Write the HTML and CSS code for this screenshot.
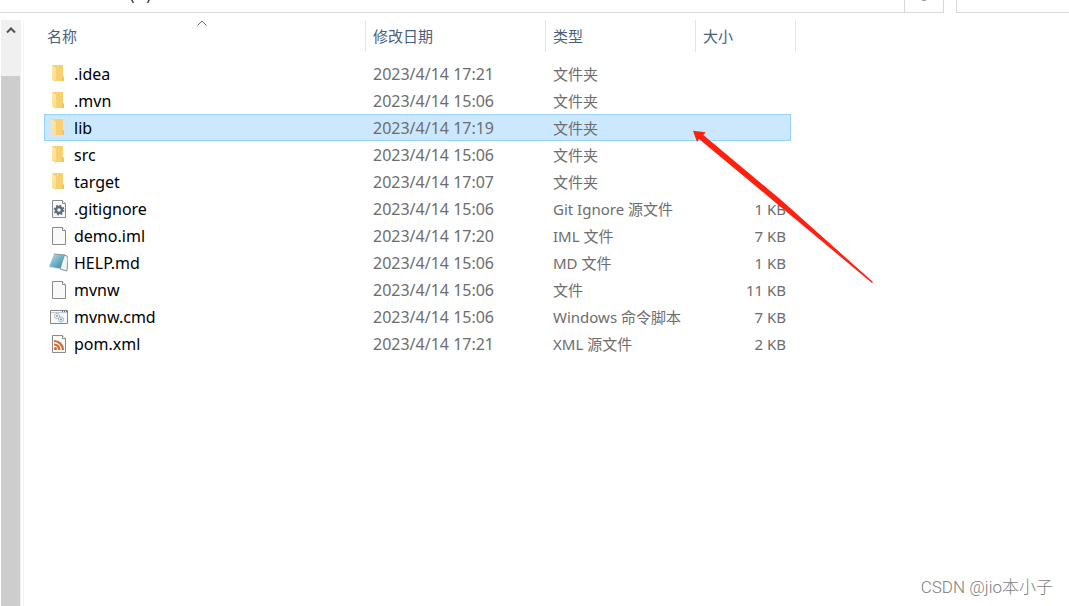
FILE: index.html
```html
<!DOCTYPE html>
<html lang="zh-CN">
<head>
  <meta charset="UTF-8">
  <meta name="viewport" content="width=device-width, initial-scale=1.0">
  <title>demo</title>
  <link rel="stylesheet" href="styles.css">
</head>
<body>

  <!-- Icons used by the file list -->
  <svg class="icon-defs" width="0" height="0" aria-hidden="true">
    <linearGradient id="folderFill" x1="0" y1="0" x2="1" y2="1">
      <stop offset="0" stop-color="#ffeaac"/>
      <stop offset="1" stop-color="#fbdb85"/>
    </linearGradient>
    <linearGradient id="noteFill" x1="0" y1="0" x2="1" y2="1">
      <stop offset="0" stop-color="#b5e3eb"/>
      <stop offset="1" stop-color="#2f7f9e"/>
    </linearGradient>
    <symbol id="folder" viewBox="0 0 20 20">
      <path d="M4 1h11v11l1 1v4H7z" fill="#f6d071"/>
      <path d="M14 12l2 1v4h-2z" fill="#eec462"/>
      <path d="M4 1l4 3v14l-4-2z" fill="url(#folderFill)"/>
    </symbol>
    <symbol id="page" viewBox="0 0 20 20">
      <path d="M4.500 1.500h10l3 3v14h-13z" fill="#f8f9f9" stroke="#8b8b8b"/>
      <path d="M14.500 1.500v3h3" fill="#fff" stroke="#8b8b8b"/>
    </symbol>
    <symbol id="gear" viewBox="0 0 20 20">
      <use href="#page"/>
      <circle cx="11" cy="11" r="3" fill="none" stroke="#5b6b77" stroke-width="2.400"/>
      <circle cx="11" cy="11" r="4.600" fill="none" stroke="#5b6b77" stroke-width="1.600" stroke-dasharray="1.800 1.810"/>
    </symbol>
    <symbol id="note" viewBox="0 0 20 20">
      <path d="M16 2l3 1 1 2-1 13-7-2z" fill="#f1f4f5" stroke="#777" stroke-width=".8"/>
      <path d="M6 1l11 1-5 14-11-2z" fill="url(#noteFill)"/>
      <path d="M6 1l11 1" stroke="#8a9ba3" stroke-width="1.200"/>
      <path d="M1 14l11 2" stroke="#d7edf2"/>
    </symbol>
    <symbol id="script" viewBox="0 0 20 20">
      <path d="M2.500 3.500h17v13h-17z" fill="#f7f8f9" stroke="#858585"/>
      <path d="M3 5.500h16" stroke="#c4c7c9"/>
      <path d="M14 4.500h1m1 0h1m1 0h1" stroke="#666"/>
      <circle cx="9" cy="9" r="2.500" fill="none" stroke="#8b949b" stroke-dasharray="1.200 .5"/>
      <circle cx="9" cy="9" r="1" fill="#8b949b"/>
      <circle cx="13" cy="12.500" r="2.500" fill="#e5f1f9" stroke="#7d9db5" stroke-dasharray="1.200 .5"/>
      <circle cx="13" cy="12.500" r="1" fill="#7d9db5"/>
    </symbol>
    <symbol id="feed" viewBox="0 0 20 20">
      <use href="#page"/>
      <circle cx="7.500" cy="14.500" r="1.600" fill="#d2692f"/>
      <path d="M6 10.500a5.500 5.500 0 0 1 5.500 5.500M6 7a9 9 0 0 1 9 9" fill="none" stroke="#d2692f" stroke-width="2.200"/>
    </symbol>
  </svg>

  <!-- Address bar and search box -->
  <header class="toolbar">
    <div class="address"><span>(F:)</span></div>
    <button class="refresh" aria-label="刷新"><svg viewBox="0 0 12 12"><circle cx="6" cy="6" r="5" fill="none" stroke="#666" stroke-width="1.500"/></svg></button>
    <input class="search" type="text" aria-label="搜索">
  </header>

  <div class="explorer">
    <div class="scrollbar">
      <button class="scroll-up" aria-label="向上滚动"><svg viewBox="0 0 10 8"><path d="M1 6.500l4-4 4 4" fill="none" stroke="#505050" stroke-width="2"/></svg></button>
      <div class="thumb"></div>
    </div>

    <main class="content">
      <table class="files">
        <thead>
          <tr>
            <th class="name">名称<svg class="sort" viewBox="0 0 10 6"><path d="M.5 5.500l4.500-4.500 4.500 4.500" fill="none" stroke="#666"/></svg></th>
            <th class="date">修改日期</th>
            <th class="type">类型</th>
            <th class="size">大小</th>
            <th class="edge"></th>
          </tr>
        </thead>
        <tbody>
          <tr><td><a href="#"><svg><use href="#folder"/></svg>.idea</a></td><td class="time">2023/4/14 17:21</td><td>文件夹</td><td></td></tr>
          <tr><td><a href="#"><svg><use href="#folder"/></svg>.mvn</a></td><td class="time">2023/4/14 15:06</td><td>文件夹</td><td></td></tr>
          <tr class="selected"><td><a href="#"><svg><use href="#folder"/></svg>lib</a></td><td class="time">2023/4/14 17:19</td><td>文件夹</td><td></td></tr>
          <tr><td><a href="#"><svg><use href="#folder"/></svg>src</a></td><td class="time">2023/4/14 15:06</td><td>文件夹</td><td></td></tr>
          <tr><td><a href="#"><svg><use href="#folder"/></svg>target</a></td><td class="time">2023/4/14 17:07</td><td>文件夹</td><td></td></tr>
          <tr><td><a href="#"><svg><use href="#gear"/></svg>.gitignore</a></td><td class="time">2023/4/14 15:06</td><td>Git Ignore 源文件</td><td>1 KB</td></tr>
          <tr><td><a href="#"><svg><use href="#page"/></svg>demo.iml</a></td><td class="time">2023/4/14 17:20</td><td>IML 文件</td><td>7 KB</td></tr>
          <tr><td><a href="#"><svg><use href="#note"/></svg>HELP.md</a></td><td class="time">2023/4/14 15:06</td><td>MD 文件</td><td>1 KB</td></tr>
          <tr><td><a href="#"><svg><use href="#page"/></svg>mvnw</a></td><td class="time">2023/4/14 15:06</td><td>文件</td><td>11 KB</td></tr>
          <tr><td><a href="#"><svg><use href="#script"/></svg>mvnw.cmd</a></td><td class="time">2023/4/14 15:06</td><td>Windows 命令脚本</td><td>7 KB</td></tr>
          <tr><td><a href="#"><svg><use href="#feed"/></svg>pom.xml</a></td><td class="time">2023/4/14 17:21</td><td>XML 源文件</td><td>2 KB</td></tr>
        </tbody>
      </table>
    </main>
  </div>

  <!-- Arrow pointing at the lib folder -->
  <svg class="arrow" viewBox="0 0 182 154" aria-hidden="true">
    <path d="M1 .7L13.700 2.300 11.300 5 88 69 181 152 180 153 84 73 7 9 5 12z" fill="#ff2010"/>
  </svg>

  <p class="watermark">CSDN @jio本小子</p>

</body>
</html>
```
FILE: styles.css
```css
* {
  margin: 0;
  padding: 0;
  box-sizing: border-box;
}

body {
  display: flex;
  flex-direction: column;
  min-height: 100vh;
  font-family: "Noto Sans", "Noto Sans CJK SC", sans-serif;
  font-size: 15px;
  color: #6d6d6d;
  background-color: #fff;
}

button {
  border: none;
  background: none;
}

.icon-defs {
  position: absolute;
}

/* Toolbar */
.toolbar {
  display: flex;
  height: 13px;
  overflow: hidden;
}

.address,
.refresh,
.search {
  display: flex;
  align-items: flex-end;
  border: 1px solid #d9d9d9;
  border-width: 0 1px 1px 0;
}

.address {
  flex: 1;
  padding: 0 0 8px 130px;
  line-height: 20px;
  color: #222;
}

.refresh {
  width: 39px;
  justify-content: center;
  padding-bottom: 11px;
}

.refresh svg {
  flex: none;
  width: 12px;
  height: 12px;
}

.search {
  width: 113px;
  margin-left: 12px;
  border-width: 0 0 1px 1px;
  outline: none;
}

/* Explorer */
.explorer {
  display: flex;
  flex: 1;
  padding-top: 7px;
}

.scrollbar {
  display: flex;
  flex-direction: column;
  width: 20px;
  margin-left: 1px;
  background-color: #f0f0f0;
}

.scroll-up {
  display: flex;
  align-items: flex-start;
  justify-content: center;
  height: 56px;
  padding-top: 6px;
}

.scroll-up svg {
  width: 10px;
  height: 8px;
}

.thumb {
  flex: 1;
  width: 19px;
  background-color: #cdcdcd;
}

.content {
  flex: 1;
  margin-left: 2px;
  padding-left: 20px;
  border-left: 1px solid #f5f5f5;
}

/* File list */
.files {
  table-layout: fixed;
  width: 752px;
  border-spacing: 0;
}

.files th {
  position: relative;
  height: 32px;
  padding: 0 0 2px 7px;
  border-right: 1px solid #e5e5e5;
  font-weight: normal;
  text-align: left;
  color: #4c607a;
}

.files .name {
  width: 322px;
  padding-left: 3px;
}

.files .date {
  width: 180px;
}

.files .type {
  width: 150px;
}

.files .size {
  width: 95px;
  border-right: none;
}

.files .edge {
  width: 5px;
  padding: 0;
}

.sort {
  position: absolute;
  top: 0;
  left: 153px;
  width: 10px;
  height: 6px;
}

.files tbody::before {
  content: "";
  display: block;
  height: 8px;
}

.files td {
  height: 27px;
  padding-left: 7px;
  line-height: 20px;
  white-space: nowrap;
}

.files td:first-child {
  padding-left: 4px;
}

.files td:last-child {
  padding: 0 5px 0 0;
  text-align: right;
}

.files a,
.files .time {
  font-size: 16px;
}

.files a {
  display: flex;
  align-items: center;
  gap: 6px;
  color: #000;
  text-decoration: none;
}

.files a svg {
  width: 20px;
  height: 20px;
}

.files .selected td {
  background-color: #cce8ff;
  box-shadow: inset 0 1px #99d1ff, inset 0 -1px #99d1ff;
}

.files .selected td:first-child {
  box-shadow: inset 0 1px #99d1ff, inset 0 -1px #99d1ff, inset 1px 0 #99d1ff;
}

.files .selected td:last-child {
  box-shadow: inset 0 1px #99d1ff, inset 0 -1px #99d1ff, inset -1px 0 #99d1ff;
}

/* Overlays */
.arrow {
  position: absolute;
  top: 130px;
  left: 692px;
  width: 182px;
  height: 154px;
}

.watermark {
  position: absolute;
  right: 16px;
  bottom: 7px;
  font-family: Roboto, "Noto Sans CJK SC", sans-serif;
  font-size: 17px;
  font-weight: 300;
  line-height: 24px;
  color: #808080;
}
```
